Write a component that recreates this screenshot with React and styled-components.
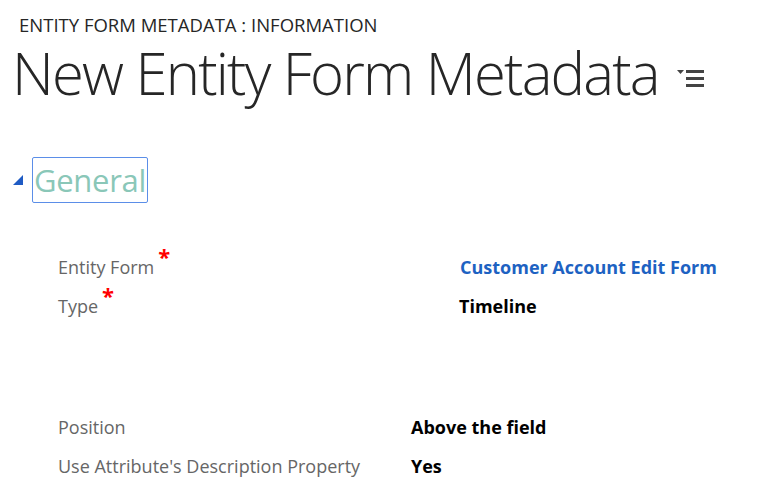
import React from "react";
import styled, { createGlobalStyle } from "styled-components";

const GlobalStyle = createGlobalStyle`
  body {
    margin: 0;
    background: #fff;
    font-family: "Open Sans", "Noto Sans", sans-serif;
  }
`;

const Page = styled.div`
  width: 768px;
  height: 500px;
  overflow: hidden;
  padding-top: 13px;
  box-sizing: border-box;
`;

const EntityName = styled.div`
  padding-left: 19px;
  font-size: 18.5px;
  line-height: 24px;
  color: #262626;
`;

const TitleRow = styled.div`
  display: flex;
  align-items: center;
  padding-left: 12px;
  margin-top: 3px;
`;

const Title = styled.h1`
  margin: 0;
  font-weight: 300;
  font-size: 58px;
  line-height: 66px;
  letter-spacing: -1.8px;
  white-space: nowrap;
  color: #262626;
`;

const MenuButton = styled.div`
  margin-left: 18px;
  margin-top: 12px;
  display: flex;
  align-items: flex-start;
`;

const Section = styled.div`
  display: flex;
  align-items: center;
  margin-top: 51px;
  padding-left: 13px;
`;

const SectionTitle = styled.div`
  margin-left: 9px;
  border: 1px solid #5b8ee8;
  border-radius: 2px;
  padding: 0 1px 0 1px;
  height: 44px;
  display: flex;
  align-items: center;
  font-size: 31px;
  color: #8ac7b8;
  letter-spacing: -0.3px;
`;

const Fields = styled.div`
  margin-top: 44px;
  padding-left: 58px;
`;

const Row = styled.div`
  display: grid;
  grid-template-columns: ${(p) => p.$labelWidth}px 1fr;
  height: 39px;
  align-items: center;
`;

const Label = styled.div`
  font-size: 18px;
  color: #666;
`;

const Required = styled.span`
  color: #f00;
  font-size: 22px;
  position: relative;
  top: -9px;
  margin-left: 4px;
  font-weight: 700;
  line-height: 0;
`;

const Value = styled.div`
  font-size: 18px;
  font-weight: 700;
  color: ${(p) => (p.$link ? "#1d62c2" : "#000")};
`;

const Spacer = styled.div`
  height: 82px;
`;

const MenuIcon = () => (
  <svg width="28" height="20" viewBox="0 0 28 20">
    <polygon points="0,1 7,1 3.5,5" fill="#444" />
    <rect x="9" y="1" width="18" height="3" fill="#444" />
    <rect x="9" y="8" width="18" height="3" fill="#444" />
    <rect x="9" y="15" width="18" height="3" fill="#444" />
  </svg>
);

const Caret = () => (
  <svg width="10" height="10" viewBox="0 0 10 10">
    <polygon points="10,0 10,10 0,10" fill="#1f5bc4" />
  </svg>
);

export default function App() {
  return (
    <>
      <GlobalStyle />
      <Page>
        <EntityName>ENTITY FORM METADATA : INFORMATION</EntityName>
        <TitleRow>
          <Title>New Entity Form Metadata</Title>
          <MenuButton>
            <MenuIcon />
          </MenuButton>
        </TitleRow>
        <Section>
          <Caret />
          <SectionTitle>General</SectionTitle>
        </Section>
        <Fields>
          <Row $labelWidth={402}>
            <Label>
              Entity Form<Required>*</Required>
            </Label>
            <Value $link>Customer Account Edit Form</Value>
          </Row>
          <Row $labelWidth={401}>
            <Label>
              Type<Required>*</Required>
            </Label>
            <Value>Timeline</Value>
          </Row>
          <Spacer />
          <Row $labelWidth={353}>
            <Label>Position</Label>
            <Value>Above the field</Value>
          </Row>
          <Row $labelWidth={353}>
            <Label>Use Attribute's Description Property</Label>
            <Value>Yes</Value>
          </Row>
        </Fields>
      </Page>
    </>
  );
}
